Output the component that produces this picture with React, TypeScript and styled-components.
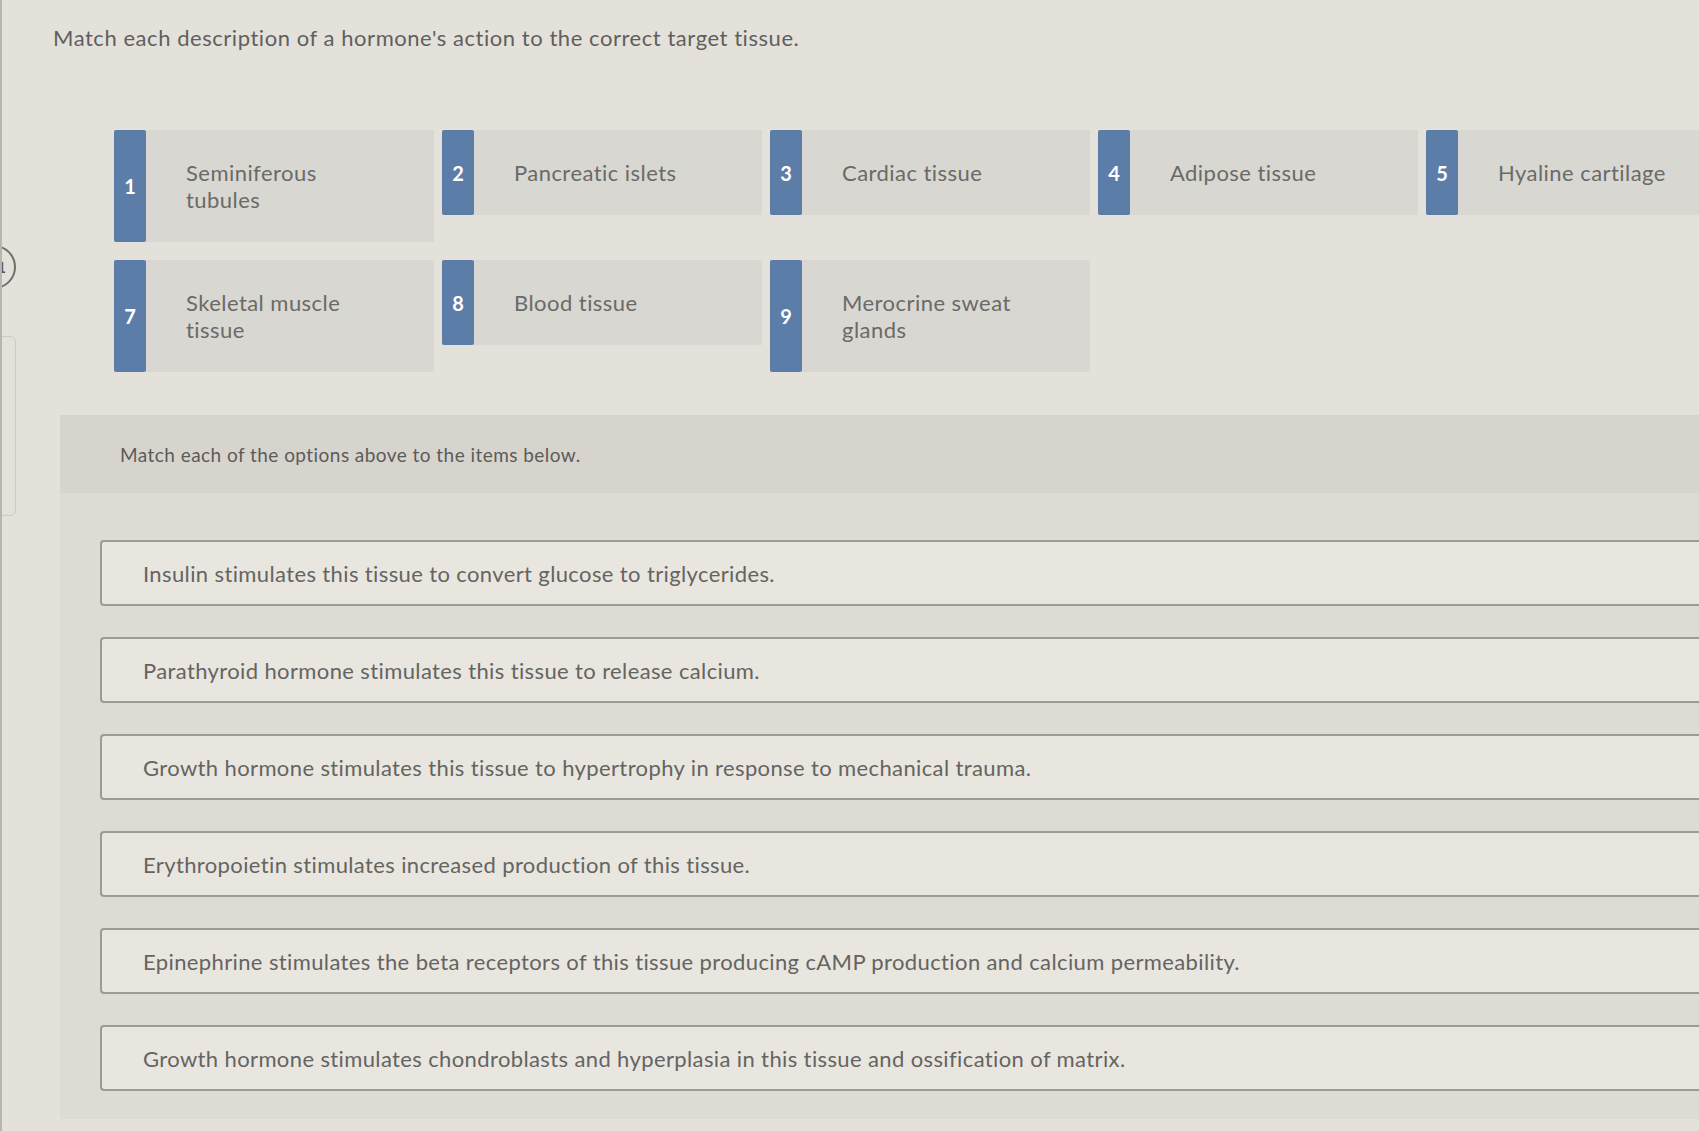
import React from "react"
import styled, { createGlobalStyle } from "styled-components"

const OPTIONS_TOP = [
  { n: 1, label: "Seminiferous tubules" },
  { n: 2, label: "Pancreatic islets" },
  { n: 3, label: "Cardiac tissue" },
  { n: 4, label: "Adipose tissue" },
  { n: 5, label: "Hyaline cartilage" },
]

const OPTIONS_BOTTOM = [
  { n: 7, label: "Skeletal muscle tissue" },
  { n: 8, label: "Blood tissue" },
  { n: 9, label: "Merocrine sweat glands" },
]

const ITEMS = [
  "Insulin stimulates this tissue to convert glucose to triglycerides.",
  "Parathyroid hormone stimulates this tissue to release calcium.",
  "Growth hormone stimulates this tissue to hypertrophy in response to mechanical trauma.",
  "Erythropoietin stimulates increased production of this tissue.",
  "Epinephrine stimulates the beta receptors of this tissue producing cAMP production and calcium permeability.",
  "Growth hormone stimulates chondroblasts and hyperplasia in this tissue and ossification of matrix.",
]

export default function App() {
  return (
    <>
      <GlobalStyle />
      <Page>
        <Rail>
          <StepCircle>1</StepCircle>
          <RailCard />
        </Rail>
        <Main>
          <Title>Match each description of a hormone's action to the correct target tissue.</Title>
          <Options>
            <OptionRow>
              {OPTIONS_TOP.map((o) => (
                <OptionCard key={o.n}>
                  <Badge>{o.n}</Badge>
                  <OptionLabel>{o.label}</OptionLabel>
                </OptionCard>
              ))}
            </OptionRow>
            <OptionRow>
              {OPTIONS_BOTTOM.map((o) => (
                <OptionCard key={o.n}>
                  <Badge>{o.n}</Badge>
                  <OptionLabel>{o.label}</OptionLabel>
                </OptionCard>
              ))}
            </OptionRow>
          </Options>
          <Panel>
            <PanelHeader>Match each of the options above to the items below.</PanelHeader>
            <PanelBody>
              {ITEMS.map((t) => (
                <DropBox key={t}>{t}</DropBox>
              ))}
            </PanelBody>
          </Panel>
        </Main>
      </Page>
    </>
  )
}

const GlobalStyle = createGlobalStyle`
  html, body {
    margin: 0;
    padding: 0;
    background: #e4e1da;
  }
  body {
    font-family: Lato, "Liberation Sans", sans-serif;
  }
`

const Page = styled.div`
  display: flex;
  width: 1699px;
  height: 1131px;
  overflow: hidden;
  background: #e4e1da;
  border-left: 2px solid #b9b6af;
  box-sizing: border-box;
`

const Rail = styled.div`
  width: 15px;
  flex-shrink: 0;
  overflow: hidden;
  display: flex;
  flex-direction: column;
`

const StepCircle = styled.div`
  margin: 245px 0 0 -30px;
  width: 44px;
  height: 44px;
  box-sizing: border-box;
  border: 2px solid #6f6e6b;
  border-radius: 50%;
  display: flex;
  align-items: center;
  justify-content: flex-end;
  padding-right: 8px;
  font-size: 15px;
  font-weight: 700;
  color: #555;
`

const RailCard = styled.div`
  margin: 47px 0 0 -22px;
  width: 36px;
  height: 180px;
  box-sizing: border-box;
  border: 1.5px solid #cdcac3;
  border-radius: 6px;
`

const Main = styled.div`
  flex: 1;
  display: flex;
  flex-direction: column;
  min-width: 0;
`

const Title = styled.h1`
  margin: 25px 0 0 36px;
  font-size: 22px;
  line-height: 26px;
  font-weight: 400;
  color: #5f5f5e;
  letter-spacing: 0.55px;
`

const Options = styled.div`
  margin: 79px 0 0 97px;
  display: flex;
  flex-direction: column;
  gap: 18px;
`

const OptionRow = styled.div`
  display: flex;
  gap: 8px;
  align-items: flex-start;
`

const OptionCard = styled.div`
  width: 320px;
  flex-shrink: 0;
  display: flex;
  background: #d9d7d1;
`

const Badge = styled.div`
  width: 32px;
  flex-shrink: 0;
  align-self: stretch;
  display: flex;
  align-items: center;
  justify-content: center;
  background: #5b7da7;
  border-radius: 2px;
  color: #fff;
  font-size: 20px;
  font-weight: 700;
`

const OptionLabel = styled.div`
  padding: 29px 0 29px 40px;
  max-width: 190px;
  font-size: 22px;
  line-height: 27px;
  letter-spacing: 0.45px;
  color: #6a6a68;
`

const Panel = styled.section`
  margin: 43px 0 0 43px;
  display: flex;
  flex-direction: column;
`

const PanelHeader = styled.div`
  height: 78px;
  display: flex;
  align-items: center;
  padding-left: 60px;
  background: #d7d4cd;
  font-size: 19px;
  letter-spacing: 0.45px;
  color: #5b5b5a;
`

const PanelBody = styled.div`
  display: flex;
  flex-direction: column;
  gap: 31px;
  padding: 47px 0 28px 40px;
  background: #dedbd4;
`

const DropBox = styled.div`
  height: 66px;
  box-sizing: border-box;
  margin-right: -12px;
  display: flex;
  align-items: center;
  padding-left: 41px;
  background: #e9e6df;
  border: 2px solid #9d9b97;
  border-right: none;
  border-radius: 4px 0 0 4px;
  font-size: 22px;
  letter-spacing: 0.38px;
  color: #646462;
`
